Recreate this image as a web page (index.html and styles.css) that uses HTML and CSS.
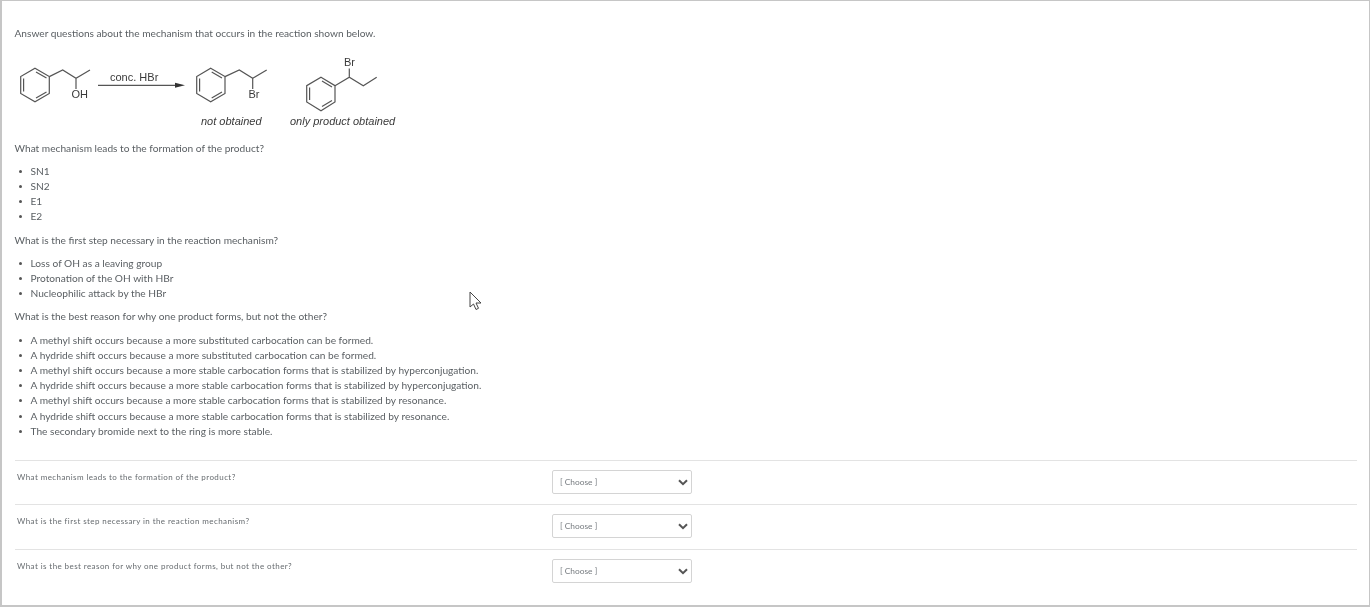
FILE: index.html
```html
<!DOCTYPE html>
<html lang="en">
<head>
<meta charset="utf-8">
<title>Reaction mechanism question</title>
<link rel="stylesheet" href="styles.css">
</head>
<body>
<main class="frame">
  <section class="prompt">
    <p class="intro">Answer questions about the mechanism that occurs in the reaction shown below.</p>
    <svg class="scheme" width="400" height="84" viewBox="0 50 400 84" xmlns="http://www.w3.org/2000/svg">
      <g class="bond">
        <path d="M35 68.3 49.3 76.6V93.4L35 101.7 20.7 93.4V76.6Z"/>
        <path d="M23.6 78.5V91.5M36 72 46.5 78M46.5 92 36 98"/>
        <path d="M49.3 76.6 62.7 70 76 78.3 90 70M76 78.3V89"/>
        <path d="M210.7 68.3 225 76.6V93.4L210.7 101.7 196.7 93.4V76.6Z"/>
        <path d="M199.6 78.5V91.5M211.7 72 222 78M222 92 211.7 98"/>
        <path d="M225 76.6 239.3 70 252.7 78.3 266.7 70M252.7 78.3V89"/>
        <path d="M321 77.3 335 85.7V102L321 110.7 306.7 102V85.7Z"/>
        <path d="M309.6 87.6V100M322 81 332 87M332 100.5 322 106.5"/>
        <path d="M335 85.7 349.3 77.3 363.3 85.7 376.7 77.3M349.3 77.3V68.5"/>
        <path d="M98 85.3H176"/>
      </g>
      <path class="head" d="M175 82.8 185 85.3 175 87.8Z"/>
      <g class="atom">
        <text x="71.500" y="98">OH</text>
        <text x="248.500" y="98">Br</text>
        <text x="344" y="66">Br</text>
        <text x="110" y="81">conc. HBr</text>
      </g>
      <g class="caption">
        <text x="201" y="124.500">not obtained</text>
        <text x="290" y="124.500">only product obtained</text>
      </g>
    </svg>
    <p class="question">What mechanism leads to the formation of the product?</p>
    <ul class="options">
      <li>SN1</li>
      <li>SN2</li>
      <li>E1</li>
      <li>E2</li>
    </ul>
    <p class="question">What is the first step necessary in the reaction mechanism?</p>
    <ul class="options">
      <li>Loss of OH as a leaving group</li>
      <li>Protonation of the OH with HBr</li>
      <li>Nucleophilic attack by the HBr</li>
    </ul>
    <p class="question">What is the best reason for why one product forms, but not the other?</p>
    <ul class="options">
      <li>A methyl shift occurs because a more substituted carbocation can be formed.</li>
      <li>A hydride shift occurs because a more substituted carbocation can be formed.</li>
      <li>A methyl shift occurs because a more stable carbocation forms that is stabilized by hyperconjugation.</li>
      <li>A hydride shift occurs because a more stable carbocation forms that is stabilized by hyperconjugation.</li>
      <li>A methyl shift occurs because a more stable carbocation forms that is stabilized by resonance.</li>
      <li>A hydride shift occurs because a more stable carbocation forms that is stabilized by resonance.</li>
      <li>The secondary bromide next to the ring is more stable.</li>
    </ul>
  </section>
  <section class="answers">
    <div class="row">
      <label class="row-label" for="a1">What mechanism leads to the formation of the product?</label>
      <div class="picker">
        <select id="a1"><option>[ Choose ]</option></select>
        <svg class="chevron" width="10" height="7" viewBox="0 0 10 7"><path d="M1 1.200 5 5.200 9 1.200"/></svg>
      </div>
    </div>
    <div class="row">
      <label class="row-label" for="a2">What is the first step necessary in the reaction mechanism?</label>
      <div class="picker">
        <select id="a2"><option>[ Choose ]</option></select>
        <svg class="chevron" width="10" height="7" viewBox="0 0 10 7"><path d="M1 1.200 5 5.200 9 1.200"/></svg>
      </div>
    </div>
    <div class="row">
      <label class="row-label" for="a3">What is the best reason for why one product forms, but not the other?</label>
      <div class="picker">
        <select id="a3"><option>[ Choose ]</option></select>
        <svg class="chevron" width="10" height="7" viewBox="0 0 10 7"><path d="M1 1.200 5 5.200 9 1.200"/></svg>
      </div>
    </div>
  </section>
  <svg class="pointer" width="14" height="20" viewBox="0 0 14 20"><path d="M1 1V16L4.500 13 7 18.500 9.500 17.300 7 12H12Z"/></svg>
</main>
</body>
</html>
```
FILE: styles.css
```css
* { box-sizing: border-box; }
html, body { margin: 0; padding: 0; background: #fff; }
body { width: 1370px; height: 607px; overflow: hidden; font-family: Lato, "Open Sans", sans-serif; color: #5a5f63; }
.frame {
  position: relative;
  width: 1370px;
  height: 607px;
  border: 1px solid #c6c6c6;
  border-left-width: 2px;
  border-bottom-width: 2px;
  padding: 25px 12px 0 12.500px;
  filter: blur(.5px);
}
.prompt { font-size: 10.160px; line-height: 15.200px; }
.prompt p { margin: 0; }
.intro { height: 15.200px; }
.scheme { display: block; margin: 9px 0 0 -14.500px; }
.bond { fill: none; stroke: #555; stroke-width: 1.200; }
.head { fill: #333; }
.atom, .caption { font-family: "Liberation Sans", Arial, sans-serif; font-size: 11px; fill: #3a3a3a; }
.caption { font-style: italic; }
.question { margin-top: 7.500px !important; }
.scheme + .question { margin-top: 6.500px !important; }
.options { list-style: none; margin: 8px 0; padding: 0 0 0 16px; }
.options li { position: relative; height: 15.200px; }
.options li::before {
  content: "";
  position: absolute;
  left: -11.500px;
  top: 6px;
  width: 3px;
  height: 3px;
  border-radius: 50%;
  background: #555;
}
.answers { margin-top: 21px; }
.row {
  display: grid;
  grid-template-columns: 535px 140px;
  height: 44.300px;
  padding: 9px 0 0 2.500px;
  border-top: 1px solid #e3e3e3;
}
.row-label { font-size: 8px; line-height: 15px; letter-spacing: .42px; color: #666b6f; }
.picker { position: relative; height: 24px; }
.picker select {
  appearance: none;
  -webkit-appearance: none;
  display: block;
  width: 140px;
  height: 24px;
  padding: 0 0 0 7px;
  border: 1px solid #d4d4d4;
  border-radius: 2px;
  background: #fff;
  color: #777c80;
  font: 8.400px Lato, sans-serif;
}
.chevron { position: absolute; right: 4px; top: 9px; }
.chevron path { fill: none; stroke: #555; stroke-width: 2; }
.pointer { position: absolute; left: 467px; top: 290px; }
.pointer path { fill: #fff; stroke: #444; stroke-width: 1; }
```
